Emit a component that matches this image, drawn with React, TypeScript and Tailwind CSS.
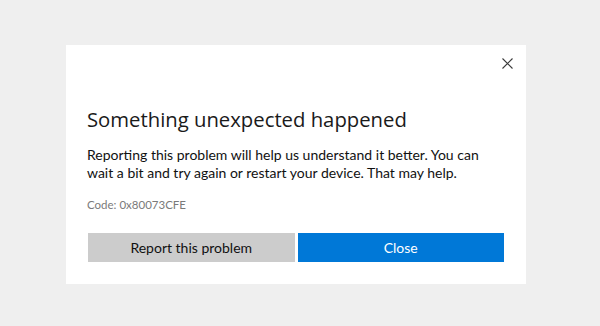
export default function App() {
    return (
        <div className="min-h-screen bg-[#efefef] pt-[45px] pl-[66px] font-['Lato',sans-serif]">
            <div className="w-[460px] h-[239px] bg-white flex flex-col px-[22px]">
                {/* close icon */}
                <div className="flex justify-end pt-[13px] -mr-[9px]">
                    <svg width="11" height="11" viewBox="0 0 11 11" className="block">
                        <path d="M0.5 0.5 L10.5 10.5 M10.5 0.5 L0.5 10.5" stroke="#3a3a3a" strokeWidth="1.1" fill="none" />
                    </svg>
                </div>

                <h1 className="mt-[36px] -ml-[1px] text-[20.3px] leading-[28px] text-[#1a1a1a] font-['Open_Sans',sans-serif] font-normal">
                    Something unexpected happened
                </h1>

                <p className="mt-[13px] -ml-[1px] text-[14px] leading-[18px] text-[#111]">
                    Reporting this problem will help us understand it better. You can
                    <br />
                    wait a bit and try again or restart your device. That may help.
                </p>

                <p className="mt-[15px] -ml-[1px] text-[11.5px] leading-[16px] text-[#7a7a7a]">Code: 0x80073CFE</p>

                <div className="mt-[20px] grid grid-cols-2 gap-[3px]">
                    <button className="h-[29px] bg-[#cccccc] text-[14px] text-[#111] flex items-center justify-center">
                        Report this problem
                    </button>
                    <button className="h-[29px] bg-[#0078d7] text-[14px] text-white flex items-center justify-center">
                        Close
                    </button>
                </div>
            </div>
        </div>
    );
}
